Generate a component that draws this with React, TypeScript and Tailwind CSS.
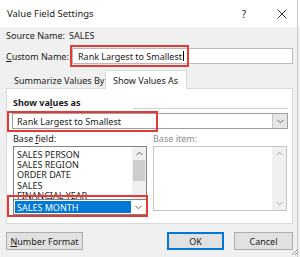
import React from "react";

function Chevron({ up = false, color = "#606060" }: { up?: boolean; color?: string }) {
  return (
    <svg width="7" height="5" viewBox="0 0 7 5" className="block">
      <path d={up ? "M0.5 4.2 L3.5 1.2 L6.5 4.2" : "M0.5 0.8 L3.5 3.8 L6.5 0.8"} fill="none" stroke={color} strokeWidth="1" />
    </svg>
  );
}

const baseFields = ["SALES PERSON", "SALES REGION", "ORDER DATE", "SALES", "FINANCIAL YEAR"];

export default function App() {
  return (
    <div
      className="relative w-[300px] h-[257px] bg-[#f0f0f0] overflow-hidden text-[9px] text-[#1a1a1a] leading-none"
      style={{ fontFamily: '"Noto Sans", "Open Sans", sans-serif' }}
    >
      {/* title bar */}
      <div className="h-[27px] bg-white flex items-center pl-[7px] pr-[13px]">
        <span className="text-[9.5px]">Value Field Settings</span>
        <span className="ml-auto mr-[31px] text-[10px]">?</span>
        <svg width="10" height="10" viewBox="0 0 10 10">
          <path d="M0.5 0.5 L9.5 9.5 M9.5 0.5 L0.5 9.5" stroke="#333" strokeWidth="1" />
        </svg>
      </div>

      <div className="absolute right-[2px] top-0 bottom-0 w-px bg-[#c8c8c8]" />

      {/* name rows */}
      <div className="pl-[6px] pr-[7px]">
        <div className="h-[14px] mt-[1px] flex items-center">
          <span className="w-[63px]">Source Name:</span>
          <span>SALES</span>
        </div>
        <div className="mt-[6px] flex items-center h-[16px]">
          <span className="w-[66px]">
            <span className="underline">C</span>ustom Name:
          </span>
          <div className="flex-1 h-[16px] bg-white border border-[#b8b8b8] flex items-center pl-[5px]">
            <span>Rank Largest to Smallest</span>
            <span className="w-px h-[10px] bg-black ml-px" />
          </div>
        </div>

        {/* tabs */}
        <div className="mt-[6px] flex items-end h-[18px] pl-[3px]">
          <div className="h-[16px] flex items-center px-[5px] w-[96px] whitespace-nowrap">Summarize Values By</div>
          <div className="h-[19px] flex items-center px-[7px] w-[82px] whitespace-nowrap bg-white border border-[#d9d9d9] border-b-0 relative z-10 -mb-px">
            Show Values As
          </div>
        </div>

        {/* panel */}
        <div className="w-[287px] h-[136px] bg-white border border-[#d9d9d9] relative">
          <div className="flex items-center h-[12px] mt-[7px] pl-[6px]">
            <span className="font-bold">
              Show va<span className="underline">l</span>ues as
            </span>
            <div className="ml-[52px] flex-1 h-px bg-[#d0d0d0] mr-[4px] mt-[12px]" />
          </div>
          <div className="ml-[5px] mt-[5px] w-[276px] h-[16px] border border-[#a0a0a0] flex items-center">
            <span className="pl-[4px] flex-1">Rank Largest to Smallest</span>
            <div className="w-[15px] h-full bg-[#e6e6e6] border-l border-[#c8c8c8] flex items-center justify-center">
              <Chevron />
            </div>
          </div>

          <div className="flex gap-[6px] pl-[6px] mt-[3px]">
            {/* base field */}
            <div className="w-[134px]">
              <div className="h-[12px] flex items-center">
                Base <span className="underline ml-[2px]">f</span>ield:
              </div>
              <div className="mt-[2px] h-[53px] border border-[#828282] border-b-0 flex overflow-hidden">
                <div className="flex-1 pl-[3px] pt-[2px]">
                  {baseFields.map((f) => (
                    <div key={f} className="h-[10.3px] flex items-center whitespace-nowrap">{f}</div>
                  ))}
                </div>
                <div className="w-[14px] bg-[#f0f0f0] flex flex-col items-center">
                  <div className="h-[13px] flex items-center">
                    <Chevron up />
                  </div>
                  <div className="w-[12px] h-[21px] bg-[#cdcdcd]" />
                </div>
              </div>
              <div className="h-[16px] border border-[#828282] bg-white flex items-center p-px">
                <div className="flex-1 h-full bg-[#0078d7] text-white flex items-center pl-[2px]">SALES MONTH</div>
                <div className="w-[14px] flex items-center justify-center">
                  <Chevron />
                </div>
              </div>
            </div>

            {/* base item */}
            <div className="w-[134px]">
              <div className="h-[12px] flex items-center text-[#8c8c8c]">Base item:</div>
              <div className="mt-[2px] h-[65px] border border-[#c4c4c4] flex">
                <div className="flex-1" />
                <div className="w-[14px] bg-[#f0f0f0] flex flex-col items-center justify-between py-[4px]">
                  <Chevron up color="#a8a8a8" />
                  <Chevron color="#a8a8a8" />
                </div>
              </div>
            </div>
          </div>
        </div>

        {/* buttons */}
        <div className="mt-[8px] flex items-center h-[18px]">
          <div className="w-[77px] h-full bg-[#e1e1e1] border border-[#adadad] flex items-center justify-center">
            <span>
              <span className="underline">N</span>umber Format
            </span>
          </div>
          <div className="ml-auto w-[57px] h-full bg-[#e1e1e1] border-2 border-[#0078d7] flex items-center justify-center">
            OK
          </div>
          <div className="ml-[10px] w-[59px] h-full bg-[#e1e1e1] border border-[#adadad] flex items-center justify-center">
            Cancel
          </div>
        </div>
      </div>

      {/* resize grip */}
      <svg width="8" height="8" viewBox="0 0 8 8" className="absolute right-[1px] bottom-[1px]">
        <path d="M7 1 L1 7 M7 4 L4 7" stroke="#9a9a9a" strokeWidth="1" />
      </svg>

      {/* red highlight boxes */}
      <div className="absolute left-[70px] top-[45px] w-[119px] h-[22px] border-2 border-[#e53935]" />
      <div className="absolute left-[7px] top-[111px] w-[151px] h-[21px] border-2 border-[#e53935]" />
      <div className="absolute left-[7px] top-[195px] w-[141px] h-[22px] border-2 border-[#e53935]" />
    </div>
  );
}
